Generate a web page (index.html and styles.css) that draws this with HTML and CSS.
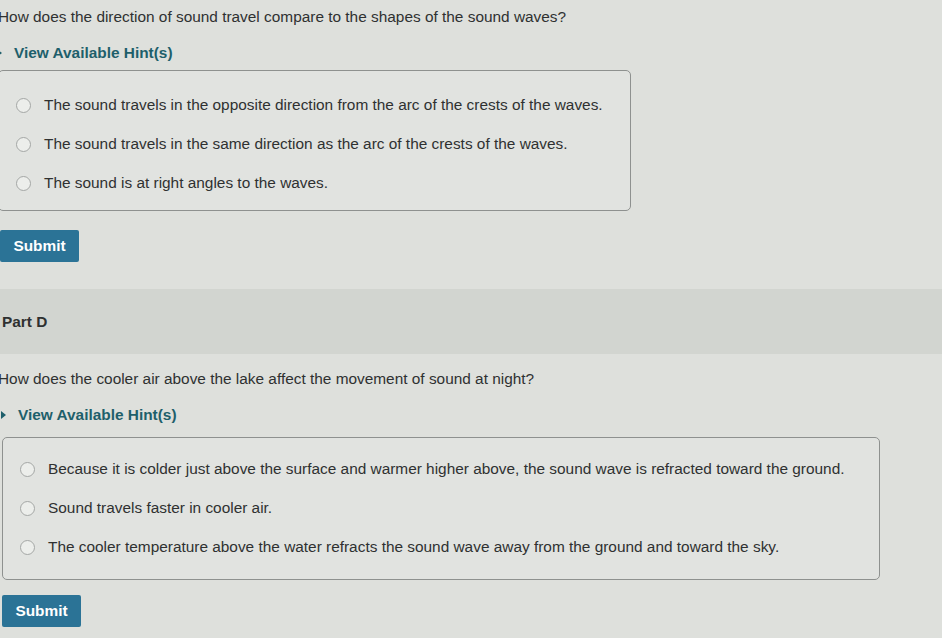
FILE: index.html
```html
<!DOCTYPE html>
<html lang="en">
<head>
  <meta charset="UTF-8">
  <title>Part C / Part D</title>
  <link rel="stylesheet" href="styles.css">
</head>
<body>
  <div class="part part-c">
    <p class="question">How does the direction of sound travel compare to the shapes of the sound waves?</p>
    <div class="hint"><span class="arrow"></span>View Available Hint(s)</div>
    <div class="choices">
      <label class="choice"><span class="radio"></span>The sound travels in the opposite direction from the arc of the crests of the waves.</label>
      <label class="choice"><span class="radio"></span>The sound travels in the same direction as the arc of the crests of the waves.</label>
      <label class="choice"><span class="radio"></span>The sound is at right angles to the waves.</label>
    </div>
    <button type="button" class="submit">Submit</button>
  </div>

  <div class="part-header">Part D</div>

  <div class="part part-d">
    <p class="question">How does the cooler air above the lake affect the movement of sound at night?</p>
    <div class="hint"><span class="arrow"></span>View Available Hint(s)</div>
    <div class="choices">
      <label class="choice"><span class="radio"></span>Because it is colder just above the surface and warmer higher above, the sound wave is refracted toward the ground.</label>
      <label class="choice"><span class="radio"></span>Sound travels faster in cooler air.</label>
      <label class="choice"><span class="radio"></span>The cooler temperature above the water refracts the sound wave away from the ground and toward the sky.</label>
    </div>
    <button type="button" class="submit">Submit</button>
  </div>
</body>
</html>
```

FILE: styles.css
```css
body {
  margin: 0;
  font-family: "Liberation Sans", Arial, sans-serif;
  font-size: 15.4px;
  line-height: 18px;
  color: #2f3131;
  background-color: #dee0dc;
  overflow: hidden;
}

.question {
  margin: 8px 0 0 -2px;
}

.hint {
  position: relative;
  margin-top: 18px;
  padding-left: 14px;
  font-weight: bold;
  color: #1e5f6b;
}

.hint .arrow {
  position: absolute;
  left: -3px;
  top: 5px;
  width: 0;
  height: 0;
  border-top: 4px solid transparent;
  border-bottom: 4px solid transparent;
  border-left: 5px solid #1e5f6b;
}

.choices {
  display: flex;
  flex-direction: column;
  gap: 21px;
  margin-top: 8px;
  padding: 25px 0 18px 17px;
  border: 1px solid #8e918f;
  border-radius: 5px;
  background-color: #e1e3e0;
}

.choice {
  display: flex;
  align-items: center;
  gap: 13px;
}

.radio {
  width: 13px;
  height: 13px;
  border: 1px solid #a4a7a5;
  border-radius: 50%;
  background-color: #eceeeb;
  flex-shrink: 0;
}

.submit {
  display: block;
  height: 32px;
  padding: 0 13px;
  border: none;
  border-radius: 2px;
  background-color: #2b7396;
  color: #fff;
  font-family: "Liberation Sans", Arial, sans-serif;
  font-size: 15.4px;
  font-weight: bold;
}

.part-c .choices {
  width: 614px;
  margin-left: -2px;
}

.part-c .submit {
  margin-top: 19px;
  width: 79px;
}

.part-header {
  margin-top: 27px;
  height: 65px;
  line-height: 65px;
  padding-left: 2px;
  font-weight: bold;
  background-color: #d2d5d0;
}

.part-d .question {
  margin-top: 16px;
}

.part-d .hint {
  margin-left: 4px;
}

.part-d .choices {
  margin-top: 13px;
  margin-left: 2px;
  width: 859px;
  padding: 22px 0 23px 17px;
}

.part-d .submit {
  margin-top: 15px;
  margin-left: 2px;
  width: 79px;
}
```
